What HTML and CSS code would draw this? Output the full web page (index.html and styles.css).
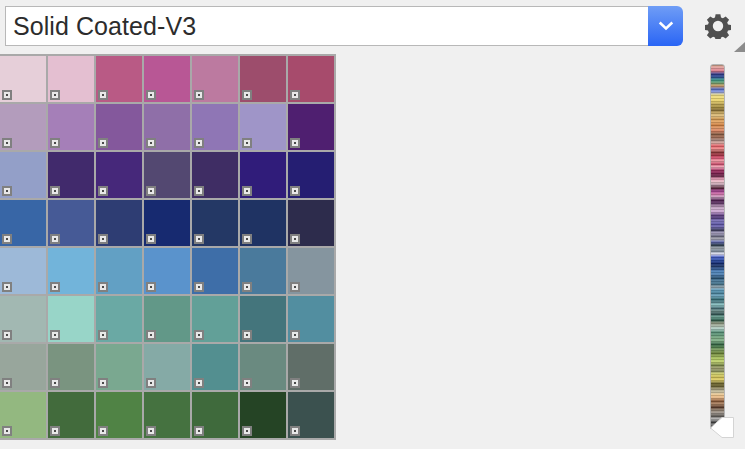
FILE: index.html
```html
<!DOCTYPE html>
<html>
  <head>
    <title>Swatches</title>
    <link rel="stylesheet" href="styles.css">
  </head>
  <body>
    <div class="toolbar">
      <div class="library-select">
        <div class="library-name">Solid Coated-V3</div>
        <div class="library-arrow">
          <svg width="16" height="10" viewBox="0 0 16 10"><path d="M1.700 1.500 L8 7.500 L14.300 1.500" fill="none" stroke="#fff" stroke-width="2.500"/></svg>
        </div>
      </div>
      <svg class="gear" width="26" height="26" viewBox="0 0 26 26">
        <path fill="#505050" fill-rule="evenodd" d="M10.6 1.2h4.8l.6 3.3 1.9.8 2.8-1.9 3.4 3.4-1.9 2.8.8 1.9 3.3.6v4.8l-3.3.6-.8 1.9 1.9 2.8-3.400 3.400-2.800-1.900-1.900.8-.6 3.300h-4.800l-.6-3.300-1.900-.8-2.800 1.900-3.400-3.400 1.900-2.800-.8-1.900-3.300-.6v-4.800l3.300-.6.8-1.900-1.900-2.800 3.400-3.400 2.800 1.900 1.900-.8z M13 7.800a5.200 5.200 0 1 0 0 10.400a5.200 5.200 0 1 0 0-10.400z"/>
      </svg>
      <div class="corner"></div>
    </div>
    <div class="main">
      <div class="swatches">
        <div class="swatch" style="background:#e6cfd9"></div>
        <div class="swatch" style="background:#e4bfd1"></div>
        <div class="swatch" style="background:#b95a85"></div>
        <div class="swatch" style="background:#b85795"></div>
        <div class="swatch" style="background:#bc7aa0"></div>
        <div class="swatch" style="background:#9d4d6c"></div>
        <div class="swatch" style="background:#a74b6c"></div>

        <div class="swatch" style="background:#b39cbc"></div>
        <div class="swatch" style="background:#a57fb8"></div>
        <div class="swatch" style="background:#84589c"></div>
        <div class="swatch" style="background:#8f6fa8"></div>
        <div class="swatch" style="background:#8f76b5"></div>
        <div class="swatch" style="background:#9f95c8"></div>
        <div class="swatch" style="background:#4f1f70"></div>

        <div class="swatch" style="background:#939fc8"></div>
        <div class="swatch" style="background:#412a6c"></div>
        <div class="swatch" style="background:#46287a"></div>
        <div class="swatch" style="background:#534871"></div>
        <div class="swatch" style="background:#3f2d64"></div>
        <div class="swatch" style="background:#301c7a"></div>
        <div class="swatch" style="background:#251e72"></div>

        <div class="swatch" style="background:#3866a6"></div>
        <div class="swatch" style="background:#465a96"></div>
        <div class="swatch" style="background:#2e3d73"></div>
        <div class="swatch" style="background:#172a70"></div>
        <div class="swatch" style="background:#243865"></div>
        <div class="swatch" style="background:#1f3363"></div>
        <div class="swatch" style="background:#2d2c4c"></div>

        <div class="swatch" style="background:#9db9d8"></div>
        <div class="swatch" style="background:#72b4da"></div>
        <div class="swatch" style="background:#62a0c4"></div>
        <div class="swatch" style="background:#5a93cc"></div>
        <div class="swatch" style="background:#3e6ea8"></div>
        <div class="swatch" style="background:#4a7a9c"></div>
        <div class="swatch" style="background:#85959f"></div>

        <div class="swatch" style="background:#a2b8b2"></div>
        <div class="swatch" style="background:#98d5c8"></div>
        <div class="swatch" style="background:#6aa9a4"></div>
        <div class="swatch" style="background:#629888"></div>
        <div class="swatch" style="background:#62a098"></div>
        <div class="swatch" style="background:#44757c"></div>
        <div class="swatch" style="background:#528ea0"></div>

        <div class="swatch" style="background:#98a69c"></div>
        <div class="swatch" style="background:#7a9480"></div>
        <div class="swatch" style="background:#7aa890"></div>
        <div class="swatch" style="background:#85aaa6"></div>
        <div class="swatch" style="background:#538f90"></div>
        <div class="swatch" style="background:#6a8a80"></div>
        <div class="swatch" style="background:#606e68"></div>

        <div class="swatch" style="background:#93b880"></div>
        <div class="swatch" style="background:#426b3c"></div>
        <div class="swatch" style="background:#508345"></div>
        <div class="swatch" style="background:#457240"></div>
        <div class="swatch" style="background:#3f6a3c"></div>
        <div class="swatch" style="background:#254425"></div>
        <div class="swatch" style="background:#3b514f"></div>
      </div>
      <div class="ramp-wrap">
        <div class="ramp"></div>
        <svg class="ramp-pointer" width="24" height="22" viewBox="0 0 24 22">
          <path d="M.5 11 L12 .5 H23.500 V20.500 H12 Z" fill="#fff" stroke="#d4d4d4"/>
        </svg>
      </div>
    </div>
  </body>
</html>
```

FILE: styles.css
```css
body {
  margin: 0;
  padding: 0;
  height: 449px;
  overflow: hidden;
  background-color: #f0f0f0;
  font-family: "Liberation Sans", Arial, sans-serif;
}

.toolbar {
  display: flex;
  align-items: center;
  position: relative;
  height: 40px;
  padding: 6px 0 0 5px;
}

.library-select {
  display: flex;
  width: 678px;
  height: 40px;
}

.library-name {
  flex: 1;
  box-sizing: border-box;
  padding-left: 7px;
  line-height: 39px;
  font-size: 25px;
  letter-spacing: 0.07px;
  color: #2c2c2c;
  background-color: #fff;
  border: 1px solid #b8b8b8;
  border-right: none;
}

.library-arrow {
  display: flex;
  align-items: center;
  justify-content: center;
  width: 35px;
  border-radius: 0 6px 6px 0;
  background: linear-gradient(#6f9df6, #2a65f5);
}

.gear {
  margin-left: 22px;
}

.corner {
  position: absolute;
  right: 0;
  top: 42px;
  width: 0;
  height: 0;
  border-bottom: 10px solid #8c8c8c;
  border-left: 11px solid transparent;
}

.main {
  display: flex;
  margin-top: 8px;
}

.swatches {
  display: grid;
  grid-template-columns: repeat(7, 46px);
  grid-auto-rows: 46px;
  gap: 2px;
  padding: 2px 2px 2px 0;
  background-color: #a9a9a9;
}

.swatch {
  position: relative;
}

/* little spot marker, the dark dot with two rings around it */
.swatch::after {
  content: "";
  position: absolute;
  left: 6px;
  bottom: 6px;
  width: 2px;
  height: 2px;
  background-color: #4a4a4a;
  box-shadow: 0 0 0 2px #e8e8e8, 0 0 0 4px #808080;
}

.ramp-wrap {
  position: relative;
  align-self: flex-start;
  margin: 10px 0 0 374px;
}

/* first layer is the fine dark line between the stripes */
.ramp {
  box-sizing: border-box;
  width: 15px;
  height: 365px;
  border: 1px solid #b5b5b5;
  border-top-left-radius: 3px;
  border-top-right-radius: 3px;
  background: repeating-linear-gradient(rgba(0, 0, 0, 0.16) 0 1px, rgba(255, 255, 255, 0.08) 1px 3px), linear-gradient(#c9a088, #e8a0a0, #d87888, #303a88, #2a4a90, #3a9888, #6a9a68, #d09860, #5068c0, #8898e0, #e8d880, #f0dc78, #e8d068, #b8a050, #a89040, #806830, #c8a860, #e0c080, #c89048, #e8a868, #c87838, #e09868, #d88060, #805840, #a06850, #a08078, #d8a8a0, #e05860, #f09090, #883838, #a03040, #d85070, #f0a0a8, #c04060, #f8b0c0, #a03060, #802050, #602040, #e8a0b8, #e8c0c8, #b090a0, #502030, #a04090, #d070a8, #c8a0c0, #502050, #5a3060, #a888a8, #d0b0d0, #c8a0d0, #604080, #503878, #8078c0, #5850a0, #7068b0, #303050, #b0a8c8, #606078, #a8a8b0, #6068b0, #203040, #a0a8b0, #708090, #e8e8f8, #4058c0, #3050a8, #102870, #203868, #305890, #5088c0, #4878a8, #204868, #5080a0, #3a6880, #90a0a8, #60a0c0, #407890, #70a8c0, #306870, #508088, #90c8c8, #406870, #70908c, #284848, #70a898, #205040, #888f78, #a8b8a8, #b0d0c8, #508870, #609878, #78a880, #80b088, #306040, #487848, #80a060, #607830, #90a850, #b0c860, #c0d070, #708040, #a0a070, #808858, #d8d870, #c8b850, #e0d068, #706830, #605828, #a09878, #c8c0a0, #f0c890, #e0b080, #805030, #b08868, #503020, #908070, #a09890, #504c48, #c0c0c0, #383838, #808080, #282828);
}

.ramp-pointer {
  position: absolute;
  left: 0;
  bottom: -10px;
}
```
